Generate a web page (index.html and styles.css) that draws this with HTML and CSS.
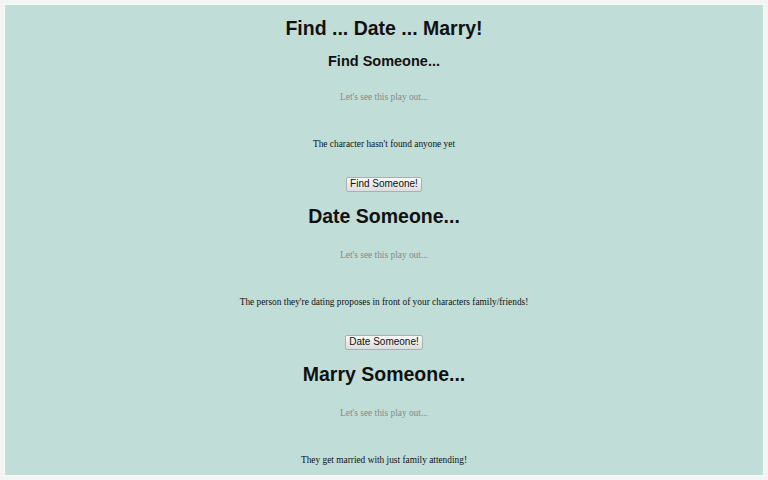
FILE: index.html
```html
<!DOCTYPE html>
<html lang="en">
<head>
    <meta charset="UTF-8">
    <meta name="viewport" content="width=device-width, initial-scale=1.0">
    <title>Find ... Date ... Marry!</title>
    <link rel="stylesheet" href="styles.css">
</head>
<body>

    <div class="game">
        <h1 class="title">Find ... Date ... Marry!</h1>

        <!-- Step 1: find -->
        <h3 class="step-small">Find Someone...</h3>
        <p class="status">Let's see this play out...</p>
        <p class="outcome">The character hasn't found anyone yet</p>
        <button class="step-btn" type="button">Find Someone!</button>

        <!-- Step 2: date -->
        <h2 class="step">Date Someone...</h2>
        <p class="status">Let's see this play out...</p>
        <p class="outcome">The person they're dating proposes in front of your characters family/friends!</p>
        <button class="step-btn" type="button">Date Someone!</button>

        <!-- Step 3: marry -->
        <h2 class="step">Marry Someone...</h2>
        <p class="status">Let's see this play out...</p>
        <p class="outcome">They get married with just family attending!</p>
    </div>

</body>
</html>
```

FILE: styles.css
```css
html, body {
    margin: 0;
    padding: 0;
    background-color: #f3f4f4;
}
body {
    padding: 4px;
    font-family: "Liberation Serif", "Times New Roman", serif;
    color: #111;
}
.game {
    height: 470px;
    overflow: hidden;
    background-color: #c1ddd8;
    border: 1px solid #f8fafa;
    text-align: center;
}
.title {
    font-family: "Liberation Sans", Arial, sans-serif;
    font-size: 19.5px;
    line-height: 22px;
    margin: 12px 0 0;
}
.step-small {
    font-family: "Liberation Sans", Arial, sans-serif;
    font-size: 14.5px;
    line-height: 16px;
    margin: 14px 0 0;
}
.step {
    font-family: "Liberation Sans", Arial, sans-serif;
    font-size: 19.5px;
    line-height: 22px;
    margin: 13px 0 0;
}
.status {
    font-size: 9.4px;
    line-height: 11px;
    color: #7d8c8a;
    margin: 23px 0 0;
}
.outcome {
    font-size: 9.35px;
    line-height: 11px;
    margin: 36px 0 0;
}
.step-btn {
    display: inline-block;
    margin: 27px 0 0;
    padding: 1px 3px 2px;
    font-family: "Liberation Sans", Arial, sans-serif;
    font-size: 10px;
    line-height: 10px;
    color: #111;
    background: linear-gradient(#f8f8f8, #dddddd);
    border: 1px solid #aab0af;
    border-radius: 2px;
    cursor: pointer;
}
```
